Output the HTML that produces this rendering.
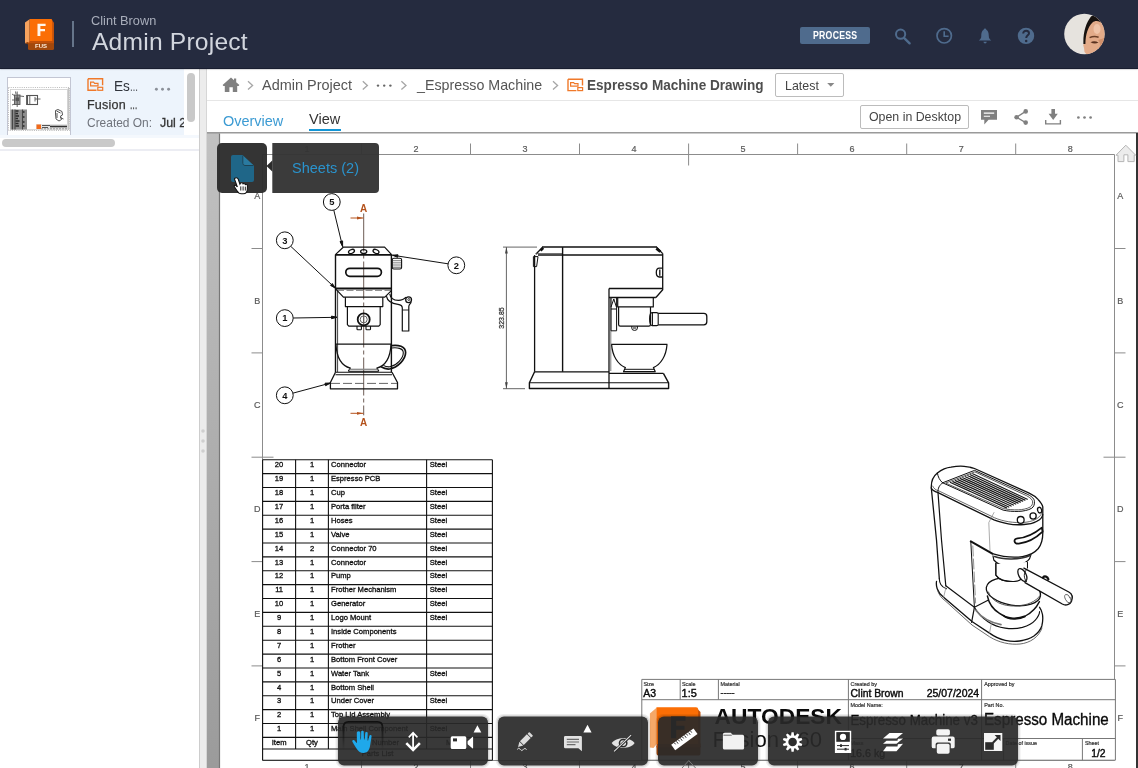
<!DOCTYPE html>
<html>
<head>
<meta charset="utf-8">
<title>Espresso Machine Drawing</title>
<style>
*{box-sizing:border-box;margin:0;padding:0}
html,body{width:1138px;height:768px;overflow:hidden;background:#fff;font-family:"Liberation Sans",sans-serif;}
#hdr,#left,#split,#main,#viewer{will-change:transform}
.abs{position:absolute}
.t{position:absolute;white-space:nowrap;transform-origin:0 0;line-height:1}
#hdr{position:absolute;left:0;top:0;width:1138px;height:68.500px;background:#252b3f;border-bottom:1px solid #191e30;box-shadow:0 0 1.500px rgba(0,0,20,.5);z-index:5}
#left{position:absolute;left:0;top:68px;width:199px;height:700px;background:#fff}
#split{position:absolute;left:199px;top:68px;width:8px;height:700px;background:#ececec;border-left:1px solid #cdcdcd;border-right:1px solid #d6d6d6}
#main{position:absolute;left:207px;top:68px;width:931px;height:700px;background:#fff}
#viewer{position:absolute;left:207px;top:132px;width:931px;height:636px;background:#bdbdbd;overflow:hidden}
</style>
</head>
<body>
<!-- HEADER -->
<div id="hdr">
<!-- fusion logo -->
<svg class="abs" style="left:22px;top:16px" width="36" height="38" viewBox="22 16 36 38">
 <path d="M28 42 L54 42 L54 48.5 Q54 50 52.5 50 L29.5 50 Q28 50 28 48.5 Z" fill="#a2480c"/>
 <path d="M52 20.5 L54 22.5 L54 43 L52 43 Z" fill="#c4520b"/>
 <path d="M28 41 L54 41 L54 43.2 L28 43.2 Z" fill="#c2500a"/>
 <path d="M25 22.5 L29.6 19.2 L29.6 41 L27.5 43.5 L25 43.2 Z" fill="#f7a35e"/>
 <path d="M25 43 L28 42 L28 44.5 Z" fill="#8a3b08"/>
 <path d="M29.6 19.1 L51 19.1 Q52.2 19.1 52.2 20.3 L52.2 41 L29.6 41 Z" fill="#fb6e05"/>
 <path d="M37.5 23.7 H45.6 V26.1 H40.4 V28.9 H45 V31.2 H40.4 V35.9 H37.5 Z" fill="#fff5ea"/>
 <text x="41" y="47.7" font-family="Liberation Sans, sans-serif" font-size="5.8" font-weight="700" fill="#ffeedd" text-anchor="middle" textLength="12" lengthAdjust="spacingAndGlyphs">FUS</text>
</svg>
<div class="abs" style="left:72px;top:21px;width:2px;height:26px;background:#66758a"></div>
<div class="t" id="h_user" style="left:91px;top:14px;font-size:13.5px;color:#a9aebb;transform:scaleX(.945)">Clint Brown</div>
<div class="t" id="h_proj" style="left:92px;top:30px;font-size:24.5px;color:#d2d6de;transform:scaleX(1.005);letter-spacing:.2px">Admin Project</div>
<!-- process btn -->
<div class="abs" style="left:800px;top:27px;width:70px;height:17px;background:#4f6b8d;border-radius:2px"></div>
<div class="t" id="h_proc" style="left:813px;top:30px;font-size:10.5px;font-weight:700;color:#fff;transform:scaleX(.83);letter-spacing:.3px">PROCESS</div>
<!-- icons -->
<svg class="abs" style="left:892px;top:26px" width="150" height="22" viewBox="892 26 150 22" fill="none" stroke="#4f6b8d">
 <circle cx="900.6" cy="34.2" r="4.6" stroke-width="2"/>
 <path d="M904 37.8 L909.6 43.3" stroke-width="2.4" stroke-linecap="round"/>
 <circle cx="944.2" cy="35.8" r="7.2" stroke-width="1.7"/>
 <path d="M944.2 31.2 V36.3 H948.6" stroke-width="1.6"/>
 <path d="M985 29 Q985 28 985 28.6 M985 29.6 C981.6 30 981.3 33.5 981.3 36 C981.3 38.5 980 39.6 978.8 40.6 L991.3 40.6 C990 39.6 988.8 38.5 988.8 36 C988.8 33.5 988.4 30 985 29.6 Z" fill="#4f6b8d" stroke="none"/>
 <circle cx="985" cy="29.6" r="1.2" fill="#4f6b8d" stroke="none"/>
 <path d="M983.4 41.8 H986.8 Q986.6 43.6 985.1 43.6 Q983.6 43.6 983.4 41.8 Z" fill="#4f6b8d" stroke="none"/>
 <circle cx="1026" cy="35.9" r="8.2" fill="#4f6b8d" stroke="none"/>
 <path d="M1023.2 33.6 C1023.2 31.6 1024.6 30.7 1026.1 30.7 C1027.8 30.7 1029 31.7 1029 33.2 C1029 35.3 1026.2 35.5 1026.2 38" stroke="#252b3f" stroke-width="2"/>
 <circle cx="1026.2" cy="40.9" r="1.25" fill="#252b3f" stroke="none"/>
</svg>
<!-- avatar -->
<svg class="abs" style="left:1062px;top:12px" width="44" height="44" viewBox="1062 12 44 44">
 <defs><clipPath id="avc"><circle cx="1084.4" cy="34" r="20.2"/></clipPath></defs>
 <g clip-path="url(#avc)">
  <rect x="1062" y="12" width="44" height="44" fill="#e6e3de"/>
  <path d="M1095 18 C1088 24 1084.3 32 1084.3 43 L1083.2 45 L1084 48 L1084.5 52 L1090 58 L1110 58 L1110 12 Z" fill="#e3ab89"/>
  <path d="M1098 40 C1102 44 1100 52 1092 56 L1110 58 L1110 36 Z" fill="#c98660" opacity=".7"/>
  <ellipse cx="1097" cy="29" rx="3.5" ry="5" fill="#f3cbb0" opacity=".8"/>
  <path d="M1091 16.5 C1086 23 1083 32 1083.4 44 L1085.4 44 C1085.6 34 1088 27 1092.5 22.5 C1095.5 20 1099.5 20.5 1104.5 25 L1108 18 L1098 12 Z" fill="#17120f"/>
  <path d="M1089.6 37.6 Q1094 35.6 1098.6 37.2" stroke="#6b3f28" stroke-width="1.5" fill="none"/>
  <path d="M1090.5 42.2 Q1094.5 40.2 1098.5 42.6 Q1094.5 44.6 1090.5 42.2 Z" fill="#5a3220"/>
 </g>
</svg>
</div>
<!-- LEFT PANEL -->
<div id="left">
<div class="abs" style="left:0;top:0;width:184px;height:67px;background:#edf4fc"></div>
<div class="abs" style="left:0;top:67px;width:199px;height:3px;background:#f4f8fd"></div>
<!-- thumbnail -->
<div class="abs" style="left:7px;top:9px;width:64px;height:58px;background:#fff;border:1px solid #c3c6d3;border-bottom:none;overflow:hidden">
<svg class="abs" style="left:0;top:0" width="62" height="57" viewBox="8 78 62 57">
 <rect x="8.5" y="87.5" width="61" height="43" fill="none" stroke="#b9b9b9" stroke-width="1" stroke-dasharray="1 1.2"/>
 <rect x="10.5" y="89.5" width="57" height="40" fill="none" stroke="#cfcfcf" stroke-width=".8"/>
 <rect x="67.8" y="88" width="1.6" height="42" fill="#c4c4c4"/>
 <!-- front view -->
 <g stroke="#555" stroke-width=".9" fill="none">
  <rect x="14.5" y="95" width="5.5" height="9.5" fill="#999"/>
  <path d="M12 94 L15 96 M12 100 H14.5 M12 105 L14.5 104 M17.2 91.5 V107 M20 96 L24 96.5 M15.5 91.5 L16 94"/>
  <rect x="16" y="98" width="2.6" height="2.6" fill="#555"/>
  <rect x="27.5" y="95.5" width="10" height="9" stroke-width="1.1"/>
  <path d="M29.8 95.5 V104.5 M35 99 H40.5 M35 97 V101.5 M26.5 95 V105"/>
 </g>
 <!-- table -->
 <rect x="10.5" y="109.5" width="16.5" height="20" fill="#8d8d8d"/>
 <g stroke="#2a2a2a" stroke-width="1.1">
  <path d="M12.5 109.5 V129.5 M15 109.5 V129.5 M22.5 109.5 V129.5" opacity=".7"/>
  <path d="M15.5 111 H18.5 M15.5 113.5 H18 M15.5 116 H19 M15.5 118.5 H18 M15.5 121 H19.5 M15.5 123.5 H18.5 M15.5 126 H19 M22.8 112 H24.5 M22.8 117 H24.5 M22.8 122 H24.5 M22.8 126 H24.5" stroke-width="1.4"/>
 </g>
 <!-- iso view -->
 <g stroke="#444" stroke-width=".9" fill="none">
  <path d="M55.5 110.5 L58 109.5 L62 111.5 L62.5 115 L60.5 116 L61.5 119.5 L59 121 L56 119 L55.5 114 Z"/>
  <path d="M56.5 111 L60.5 113 M57 113 V118 M60 117.5 L63.5 119"/>
 </g>
 <!-- title block -->
 <rect x="36" y="124" width="31.5" height="5.5" fill="#e4e4e4"/>
 <rect x="36.5" y="124.5" width="4.5" height="4.5" fill="#f26a1b"/>
 <path d="M42 125.5 H50 M42 127.5 H48" stroke="#555" stroke-width="1"/>
 <path d="M50 126.5 H67" stroke="#333" stroke-width="1.6"/>
 <path d="M41 128.8 H67" stroke="#777" stroke-width=".7" stroke-dasharray="2 1"/>
</svg>
</div>
<!-- file icon -->
<svg class="abs" style="left:86px;top:9px" width="19" height="15" viewBox="86 77 19 15" fill="none" stroke="#f0792a">
 <path d="M88 78.7 H102.6 V85.2 M96.5 90.2 H88 V78.7" stroke-width="1.4"/>
 <path d="M90.6 85.8 V82.2 H93.6 L94.6 83.3 H98 V85.8 Z" stroke-width="1.2"/>
 <rect x="97.8" y="87.3" width="4.9" height="3" stroke-width="1.2"/>
</svg>
<div class="t" id="l_es" style="left:114px;top:10px;font-size:15.5px;color:#30343c;transform:scaleX(.88)">Es<span style="display:inline-block;transform:scaleX(.62);transform-origin:0 0">…</span></div>
<svg class="abs" style="left:153px;top:18px" width="20" height="6" viewBox="0 0 20 6" fill="#8b9099"><circle cx="3.4" cy="3.3" r="1.45"/><circle cx="9.5" cy="3.3" r="1.45"/><circle cx="15.6" cy="3.3" r="1.45"/></svg>
<div class="t" id="l_fu" style="left:87px;top:30px;font-size:13.5px;color:#333;transform:scaleX(.93);letter-spacing:.2px;-webkit-text-stroke:.25px #333">Fusion <span style="display:inline-block;transform:scaleX(.62);transform-origin:0 0">…</span></div>
<div class="t" id="l_cr" style="left:87px;top:48px;font-size:13.5px;color:#6f737b;transform:scaleX(.885)">Created On:</div>
<div class="abs" style="left:158px;top:46px;width:26px;height:18px;overflow:hidden"><div class="t" id="l_jul" style="left:2px;top:2px;font-size:13.5px;color:#333;transform:scaleX(.92);-webkit-text-stroke:.3px #333">Jul 2024</div></div>
<!-- v scrollbar -->
<div class="abs" style="left:184px;top:0;width:15px;height:67px;background:#fff"></div>
<div class="abs" style="left:187px;top:5px;width:8px;height:48.500px;background:#c9c9c9;border-radius:4px"></div>
<!-- h scrollbar -->
<div class="abs" style="left:2px;top:70.500px;width:113px;height:8.500px;background:#c9c9c9;border-radius:4.500px"></div>
<div class="abs" style="left:0;top:81px;width:199px;height:2px;background:#ecedf3"></div>
</div>
<div id="split"><svg class="abs" style="left:0;top:358px" width="7" height="30" viewBox="0 0 7 30" fill="#cfcfcf"><circle cx="3" cy="5" r="1.8"/><circle cx="3" cy="15" r="1.8"/><circle cx="3" cy="25" r="1.8"/></svg></div>
<!-- MAIN -->
<div id="main">
<div class="abs" style="left:0;top:32px;width:931px;height:1px;background:#e6e6e6"></div>
<!-- breadcrumb (coords relative to main: x-207,y-68) -->
<svg class="abs" style="left:14px;top:8px" width="380" height="18" viewBox="221 76 380 18" fill="none">
 <path d="M222.6 85 L231 77.6 L234 80.2 V78.6 H236.2 V82.2 L239.4 85 L238.6 85.9 L237.2 85.9 V92 H232.8 V87.3 H229.4 V92 H224.8 V85.9 L223.4 85.9 Z" fill="#808080"/>
 <g stroke="#a6a6a6" stroke-width="1.3">
  <path d="M248 81.2 L252.6 85.4 L248 89.6"/>
  <path d="M362.8 81.2 L367.4 85.4 L362.8 89.6"/>
  <path d="M401.4 81.2 L406 85.4 L401.4 89.6"/>
  <path d="M553 81.2 L557.6 85.4 L553 89.6"/>
 </g>
 <g fill="#666"><circle cx="378" cy="85.6" r="1.2"/><circle cx="384.2" cy="85.6" r="1.2"/><circle cx="390.4" cy="85.6" r="1.2"/></g>
 <g stroke="#f0792a">
  <path d="M568 79.2 H582.5 V85.6 M576.4 90.6 H568 V79.2" stroke-width="1.4"/>
  <path d="M570.6 86.2 V82.6 H573.6 L574.6 83.7 H578 V86.2 Z" stroke-width="1.2"/>
  <rect x="577.8" y="87.6" width="4.8" height="3" stroke-width="1.2"/>
 </g>
</svg>
<div class="t" id="b_ap" style="left:55px;top:9.300px;font-size:15px;color:#555;transform:scaleX(.965)">Admin Project</div>
<div class="t" id="b_em" style="left:210px;top:9.300px;font-size:15px;color:#555;transform:scaleX(.95)">_Espresso Machine</div>
<div class="t" id="b_ti" style="left:380px;top:9.300px;font-size:15px;font-weight:700;color:#4e4e4e;transform:scaleX(.905)">Espresso Machine Drawing</div>
<div class="abs" style="left:568px;top:5px;width:69px;height:24px;border:1px solid #bcbcbc;border-radius:2px;background:#fff"></div>
<div class="t" id="b_la" style="left:578px;top:10.5px;font-size:13.5px;color:#444;transform:scaleX(.92)">Latest</div>
<svg class="abs" style="left:619px;top:14px" width="10" height="6" viewBox="0 0 10 6"><path d="M1.2 1 H8.4 L4.8 4.8 Z" fill="#888"/></svg>
<!-- tabs -->
<div class="t" id="t_ov" style="left:16px;top:45px;font-size:15px;color:#3c9bd3;transform:scaleX(.965)">Overview</div>
<div class="t" id="t_vi" style="left:102px;top:43px;font-size:15px;color:#333;transform:scaleX(.97)">View</div>
<div class="abs" style="left:102px;top:61px;width:32px;height:2px;background:#1195d6"></div>
<!-- right buttons -->
<div class="abs" style="left:653px;top:37px;width:109px;height:24px;border:1px solid #bcbcbc;border-radius:2px;background:#fff"></div>
<div class="t" id="b_od" style="left:662px;top:42px;font-size:13.5px;color:#444;transform:scaleX(.915)">Open in Desktop</div>
<svg class="abs" style="left:770px;top:38px" width="122" height="22" viewBox="977 106 122 22" fill="#808080">
 <path d="M981 110 H997 V119.8 H988.6 L984.3 124.6 V119.8 H981 Z"/>
 <path d="M983.8 113.1 H994.2 M983.8 116.2 H990" stroke="#fff" stroke-width="1.1" fill="none"/>
 <circle cx="1025.7" cy="111.4" r="2.3"/><circle cx="1016.6" cy="117.2" r="2.3"/><circle cx="1025.7" cy="122.6" r="2.3"/>
 <path d="M1025.7 111.4 L1016.6 117.2 L1025.7 122.6" stroke="#808080" stroke-width="1.3" fill="none"/>
 <path d="M1051.4 108.9 H1055 V113.8 H1057.8 L1053.2 120 L1048.6 113.8 H1051.4 Z"/>
 <path d="M1045.7 120 V123.9 H1060.4 V120" stroke="#808080" stroke-width="1.4" fill="none"/>
 <circle cx="1078.4" cy="117.5" r="1.35"/><circle cx="1084.5" cy="117.5" r="1.35"/><circle cx="1090.6" cy="117.5" r="1.35"/>
</svg>
</div>
<!-- VIEWER -->
<div id="viewer">
<svg class="abs" style="left:0;top:0" width="931" height="636" viewBox="207 132 931 636">
<defs><linearGradient id="vbg" x1="0" y1="0" x2="0" y2="1"><stop offset="0" stop-color="#c1c1c1"/><stop offset="1" stop-color="#9b9b9b"/></linearGradient><linearGradient id="actg" x1="0" y1="721" x2="0" y2="750" gradientUnits="userSpaceOnUse"><stop offset="0" stop-color="#101010"/><stop offset=".35" stop-color="#101010" stop-opacity=".7"/><stop offset="1" stop-color="#101010" stop-opacity="0"/></linearGradient></defs><rect x="207" y="132" width="931" height="636" fill="url(#vbg)"/>
<rect x="207" y="132" width="931" height="1.6" fill="#9a9a9a"/>
<rect x="219.5" y="133.6" width="917" height="640" fill="#fff"/>
<path d="M219.5 133.6 V768" stroke="#777" stroke-width="1.2"/>
<path d="M1137 133 V768" stroke="#333" stroke-width="2"/>
<g id="frame" stroke="#8c8c8c" stroke-width="1" fill="none"><path d="M262.5 154.5 H1114.5 V760.5 H262.5 Z"/><path d="M361.5 143.5 V154.5 M361.5 760.5 V768"/><path d="M470.5 143.5 V154.5 M470.5 760.5 V768"/><path d="M579.5 143.5 V154.5 M579.5 760.5 V768"/><path d="M688.6 143.5 V165.5 M688.6 749.5 V768"/><path d="M797.6 143.5 V154.5 M797.6 760.5 V768"/><path d="M906.7 143.5 V154.5 M906.7 760.5 V768"/><path d="M1015.7 143.5 V154.5 M1015.7 760.5 V768"/><path d="M251.5 248.5 H262.5 M1114.5 248.5 H1125.5"/><path d="M251.5 352.9 H262.5 M1114.5 352.9 H1125.5"/><path d="M251.5 457.2 H273.5 M1103.5 457.2 H1125.5"/><path d="M251.5 561.6 H262.5 M1114.5 561.6 H1125.5"/><path d="M251.5 665.9 H262.5 M1114.5 665.9 H1125.5"/></g>
<g id="zlab" font-family="Liberation Sans, sans-serif" font-size="9" fill="#5a5a5a" stroke="#5a5a5a" stroke-width=".2" text-anchor="middle"><text x="307.0" y="152.2">1</text><text x="307.0" y="769.5">1</text><text x="416.0" y="152.2">2</text><text x="416.0" y="769.5">2</text><text x="525.0" y="152.2">3</text><text x="525.0" y="769.5">3</text><text x="634.0" y="152.2">4</text><text x="634.0" y="769.5">4</text><text x="743.1" y="152.2">5</text><text x="743.1" y="769.5">5</text><text x="852.1" y="152.2">6</text><text x="852.1" y="769.5">6</text><text x="961.2" y="152.2">7</text><text x="961.2" y="769.5">7</text><text x="1070.2" y="152.2">8</text><text x="1070.2" y="769.5">8</text><text x="257.3" y="199.2">A</text><text x="1120.2" y="199.2">A</text><text x="257.3" y="303.6">B</text><text x="1120.2" y="303.6">B</text><text x="257.3" y="408.0">C</text><text x="1120.2" y="408.0">C</text><text x="257.3" y="512.3">D</text><text x="1120.2" y="512.3">D</text><text x="257.3" y="616.7">E</text><text x="1120.2" y="616.7">E</text><text x="257.3" y="721.0">F</text><text x="1120.2" y="721.0">F</text></g>
<path d="M1116 155.200 L1125.800 145.200 L1135.700 155.200 L1134.200 155.200 L1134.200 161.600 L1127.900 161.600 L1127.900 154.800 L1123.900 154.800 L1123.900 161.600 L1118 161.600 L1118 155.200 Z" fill="#ececec" stroke="#b5b5b5" stroke-width="1"/>
<g id="frontview" fill="none" stroke="#111" stroke-linejoin="round"><path d="M333.8 210.2 L342.6 246.6" stroke="#111" stroke-width="1" fill="none"/><path d="M342.6 246.6 L342.6 240.9 L340.0 241.6 Z" fill="#111"/><path d="M290.6 246.2 L335.4 288.2" stroke="#111" stroke-width="1" fill="none"/><path d="M335.4 288.2 L332.3 283.5 L330.5 285.4 Z" fill="#111"/><path d="M448 263.8 L392.4 255.2" stroke="#111" stroke-width="1" fill="none"/><path d="M392.4 255.2 L397.6 257.3 L398.0 254.8 Z" fill="#111"/><path d="M293.2 318 L337 317.3" stroke="#111" stroke-width="1" fill="none"/><path d="M337 317.3 L331.5 316.1 L331.5 318.7 Z" fill="#111"/><path d="M292.8 393.2 L330.6 383" stroke="#111" stroke-width="1" fill="none"/><path d="M330.6 383 L325.0 383.2 L325.6 385.7 Z" fill="#111"/><circle cx="331.8" cy="202" r="8.4" fill="#fff" stroke="#111" stroke-width="1"/><text x="331.8" y="205.2" font-family="Liberation Sans, sans-serif" font-size="9.400" font-weight="700" fill="#111" stroke="none" text-anchor="middle">5</text><circle cx="284.8" cy="240.3" r="8.4" fill="#fff" stroke="#111" stroke-width="1"/><text x="284.8" y="243.5" font-family="Liberation Sans, sans-serif" font-size="9.400" font-weight="700" fill="#111" stroke="none" text-anchor="middle">3</text><circle cx="456.3" cy="265.3" r="8.4" fill="#fff" stroke="#111" stroke-width="1"/><text x="456.3" y="268.5" font-family="Liberation Sans, sans-serif" font-size="9.400" font-weight="700" fill="#111" stroke="none" text-anchor="middle">2</text><circle cx="284.8" cy="318.1" r="8.4" fill="#fff" stroke="#111" stroke-width="1"/><text x="284.8" y="321.3" font-family="Liberation Sans, sans-serif" font-size="9.400" font-weight="700" fill="#111" stroke="none" text-anchor="middle">1</text><circle cx="284.8" cy="395.3" r="8.4" fill="#fff" stroke="#111" stroke-width="1"/><text x="284.8" y="398.5" font-family="Liberation Sans, sans-serif" font-size="9.400" font-weight="700" fill="#111" stroke="none" text-anchor="middle">4</text><path d="M363.7 213.500 V415.300" stroke="#5c4a42" stroke-width=".9" stroke-dasharray="38 3 4 3" stroke-dashoffset="0"/><path d="M350.500 218 H363.500 M350.500 413.300 H363.500" stroke="#b4521c" stroke-width="1"/><path d="M363 218 L357 216.600 V219.400 Z M363 413.300 L357 411.900 V414.700 Z" fill="#b4521c" stroke="none"/><g font-family="Liberation Sans, sans-serif" font-size="10" font-weight="700" fill="#b4521c" stroke="none" text-anchor="middle"><text x="363.700" y="212.400">A</text><text x="363.700" y="426.400">A</text></g><path d="M335.400 254.600 L343.200 247.200 H384.600 L391.600 254.600" stroke-width="1.200"/><path d="M335.400 254.800 H391.600" stroke-width="1.800"/><ellipse cx="351.500" cy="251.500" rx="3.100" ry="1.900" transform="rotate(-22 351.500 251.500)" stroke-width="1.300"/><ellipse cx="363.700" cy="251.500" rx="3.100" ry="1.900" stroke-width="1.300"/><ellipse cx="376" cy="251.500" rx="3.100" ry="1.900" transform="rotate(22 376 251.500)" stroke-width="1.300"/><path d="M335.500 254.600 V372.300 M391.400 254.600 V372.300" stroke-width="1.400"/><path d="M337.600 290 V372" stroke-width="1" stroke="#444"/><rect x="345.800" y="268.300" width="35.600" height="8" rx="4" stroke-width="1.700"/><path d="M335.400 288.500 H391.600" stroke-width="1.800"/><path d="M337 290.400 H391" stroke-width=".8" stroke="#666" stroke-dasharray="7 2.500"/><path d="M335.600 288.800 L343.400 297.200 H384.800 L391.400 290.600" stroke-width="1.200"/><path d="M345.400 297.200 V306.600 H382.800 V297.200" stroke-width="1.200"/><path d="M347.400 306.600 V324.600 L348.800 326.100 H378.800 L380.200 324.600 V306.600" stroke-width="1.200"/><circle cx="363.700" cy="319.400" r="6" stroke-width="1.800"/><circle cx="363.700" cy="319.400" r="3.500" stroke-width=".9" stroke="#555"/><path d="M363.700 316.500 V322.300" stroke-width=".8" stroke="#555"/><path d="M357 326.100 V329 Q357 329.800 357.800 329.800 H360.600 Q361.400 329.800 361.400 329 V326.100 M366 326.100 V329 Q366 329.800 366.800 329.800 H369.700 Q370.500 329.800 370.500 329 V326.100" stroke-width="1.100"/><rect x="392.300" y="258.200" width="9.300" height="10.800" rx="1.600" stroke-width="1.100"/><path d="M393 260.500 H401 M393 262.300 H401 M393 264.100 H401 M393 265.900 H401 M393 267.500 H401" stroke="#777" stroke-width=".8"/><path d="M386.400 296.200 C387.400 301.500 391 303.600 398 304.400 C401 304.800 402.300 305.600 402.300 308 V331 H408.800 V306.600 C408.800 304.600 410.400 304 411.200 302.200" stroke-width="1.200"/><path d="M389.800 294 C390.400 298.600 393 300.200 398.400 300.400 C402 300.400 404.400 299 406 297.200" stroke-width="1.200"/><circle cx="408.600" cy="299.700" r="2.900" stroke-width="1.300"/><circle cx="408.800" cy="299.500" r="1" stroke-width=".8"/><path d="M402.300 310 H408.800" stroke-width=".9"/><path d="M335.500 344.200 H391.400" stroke-width="1.300"/><path d="M336 344.400 C336.600 357 341.600 365.800 350.400 368.200 L348.300 371 M391 344.400 C390.400 357 385.400 365.800 376.800 368.200 L378.800 371" stroke-width="1.200"/><path d="M349.500 369.300 H377.600" stroke="#888" stroke-width="1.300"/><path d="M348.300 371.300 H378.800" stroke-width="1"/><path d="M391.600 345.600 C398 344.800 405.600 346 405.600 352.600 C405.600 359.600 397.600 367.600 389.600 369 C386.400 369.400 383.600 368.400 381 366.800" stroke-width="1.700"/><path d="M391.600 348 C397 347.400 403.300 348 403.300 352.800 C403.300 358.400 396.800 365.400 390 366.800 C387.400 367.200 385.400 366.600 383.400 365.400" stroke-width="1.100"/><path d="M335.500 372.300 H392 M335.500 374.700 H392" stroke-width="1.100"/><path d="M335.500 372.300 L330.400 382.500 V388.800 H397.500 V382.500 L392 372.300" stroke-width="1.300"/><path d="M331 383.400 H397" stroke-width=".9" stroke="#555" stroke-dasharray="9 3"/></g>
<g id="sideview" fill="none" stroke="#111" stroke-linejoin="round" stroke-width="1.200"><path d="M503 247.100 H537 M503 388.700 H525 M506.400 247.100 V388.700" stroke="#555" stroke-width=".9"/><path d="M506.400 247.100 L505 253.600 H507.800 Z M506.400 388.700 L505 382.200 H507.800 Z" fill="#444" stroke="none"/><text transform="translate(504,318) rotate(-90)" font-family="Liberation Sans, sans-serif" font-size="7" fill="#333" stroke="#333" stroke-width=".25" text-anchor="middle">323.85</text><path d="M542 247.100 H657" stroke-width="1.500"/><path d="M538 255.100 H662.700" stroke-width="1.500"/><path d="M542.600 247.300 L535.800 254.200" stroke-width="1.300"/><path d="M543.200 247.800 L540.600 250.600" stroke-width="2.600"/><path d="M656.600 247.300 L662.700 253.600" stroke-width="1.300"/><path d="M656.400 248.400 L660.400 251.800" stroke-width="2.800"/><path d="M536 253.600 H562.600" stroke-width=".9" stroke="#555"/><path d="M534.600 255.100 V371.800" stroke-width="1.300"/><path d="M533.400 256.600 H538 L536.600 266.600 H533.400 Z" stroke-width="1"/><path d="M562.600 247.100 V371.800" stroke-width="1.400"/><path d="M662.700 253.600 V289.800 L655.900 297.500" stroke-width="1.300"/><path d="M609 288.600 H662.700" stroke-width="1.500"/><path d="M609 297.500 H655.900" stroke-width="1.300"/><path d="M662.700 268.200 H659.400 Q656.300 268.200 656.300 272.600 Q656.300 277 659.400 277 H662.700 M659.800 269.400 V275.800" stroke-width="1.300"/><path d="M609 288.600 V388.400" stroke-width="1.300"/><path d="M610.800 297.500 V371" stroke-width=".8" stroke="#555"/><path d="M611 297.500 V330.800 H616.600 V297.500 M611 307 L613.800 299 L616.400 307 M611 309 H616.600" stroke-width="1"/><path d="M617.700 297.500 V306.900 H653.300 V297.500" stroke-width="1.200"/><path d="M618.600 306.900 V324.400 Q618.600 326.100 620.300 326.100 H648.800 Q650.500 326.100 650.500 324.400 V306.900" stroke-width="1.200"/><path d="M631.800 326.100 V328.200 Q631.800 330.400 634.600 330.400 Q637.400 330.400 637.400 328.200 V326.100 M633 328 H636.200" stroke-width="1"/><path d="M652 312.600 H656.600 Q658.200 312.600 658.200 314 V324.200 Q658.200 325.600 656.600 325.600 H652 Q649.600 325.600 649.600 319.100 Q649.600 312.600 652 312.600 Z M652.400 312.800 V325.400" stroke-width="1.100"/><path d="M658.200 313.400 H703.800 Q706.800 313.400 706.800 316.400 V321.800 Q706.800 324.800 703.800 324.800 H658.200" stroke-width="1.300"/><path d="M611.200 344.400 H667.400" stroke-width="1.300"/><path d="M611.600 344.600 C612.400 355.600 617.600 364.400 625.400 367.600 L623.600 371.400 M667 344.600 C666.200 355.600 661 364.400 653.400 367.600 L655.200 371.400" stroke-width="1.200"/><path d="M624.800 369.300 H654" stroke-width="1"/><path d="M534.600 371.800 H609 M609 373.400 H663.400 M623 371.600 H655.600" stroke-width="1.300"/><path d="M534.600 371.800 L529.400 382.800 V388.500 H668.600 V382.800 L663.400 373.400" stroke-width="1.400"/><path d="M529.400 382.800 H668.600" stroke-width="1.100"/></g>
<g id="isoview" fill="none" stroke="#111" stroke-width="1.100" stroke-linejoin="round" stroke-linecap="round"><path d="M931.300 488 C931 481 933.500 476 937.400 473 C942 469.500 947 467.600 951 467.200 C956 466.200 961 466 964.100 466.300 C968 466.600 971.500 467.400 974.500 468.500 L1029.200 493.200 C1033 495 1036 497 1038.300 499.700 C1041 502.600 1042.500 505 1042.800 506.900 L1042.800 514.700 C1042 518 1040 520 1037 521.200 C1033 523.400 1028 524.400 1024 524.500 C1018 525 1012 524.600 1008.300 523.800 C1003 522.800 998 521.600 994 519.900 L938 492.600 C934.500 491.400 932 490 931.300 488 Z" stroke-width="1.300"/><path d="M932.600 486 C934 489 936 490 938.600 490.800 L994.600 517.800 C1003 521.400 1014 523.200 1024 522.400 C1032 521.800 1039 519 1041.600 513.600" stroke-width=".8" stroke="#444"/><path d="M937.400 473 C938 477 939.600 480.200 942.600 482.800" stroke-width="1"/><path d="M938 492.600 C937.600 488 939.600 485 942.600 482.800" stroke-width="1"/><path d="M942.600 482.800 L974.500 470.400 L1027.900 494.500 C1032 496.600 1034.600 499 1034.400 501.700 C1034.600 505 1033.600 506.800 1031.800 508.200 C1028 510.400 1023 511.200 1018.800 511.400 C1013 511.600 1008 511.200 1003.100 510.100 L942.600 482.800" stroke-width="1"/><path d="M946 482.900 L974.800 471.900 L1026.600 495.700 C1030.400 497.700 1032.600 499.600 1032.600 501.900 C1032.600 504.400 1031.800 505.900 1030.200 507 C1026.600 509 1022.600 509.600 1018.600 509.800 C1013 510 1008.400 509.600 1003.600 508.600 Z" stroke-width=".8" stroke="#333"/><path d="M950.5 482.5 L1006.5 507.9" stroke-width="1.250" stroke="#1a1a1a"/><path d="M952.9 481.6 L1008.8 507.0" stroke-width="1.250" stroke="#1a1a1a"/><path d="M955.4 480.6 L1011.1 506.0" stroke-width="1.250" stroke="#1a1a1a"/><path d="M957.9 479.6 L1013.4 505.0" stroke-width="1.250" stroke="#1a1a1a"/><path d="M960.4 478.6 L1015.7 504.0" stroke-width="1.250" stroke="#1a1a1a"/><path d="M962.8 477.7 L1018.1 503.1" stroke-width="1.250" stroke="#1a1a1a"/><path d="M965.3 476.7 L1020.4 502.1" stroke-width="1.250" stroke="#1a1a1a"/><path d="M967.8 475.7 L1022.7 501.1" stroke-width="1.250" stroke="#1a1a1a"/><path d="M970.3 474.7 L1025.0 500.1" stroke-width="1.250" stroke="#1a1a1a"/><path d="M972.7 473.8 L1027.3 499.2" stroke-width="1.250" stroke="#1a1a1a"/><path d="M994 512.500 L988.800 522.600 L990 551" stroke-width=".7" stroke="#888"/><circle cx="1020.700" cy="519.900" r="3.400" stroke-width="1.300" fill="#fff"/><circle cx="1033.100" cy="516" r="3.100" stroke-width="1.300" fill="#fff"/><ellipse cx="1039.600" cy="510.100" rx="2" ry="2.900" stroke-width="1.300" fill="#fff" transform="rotate(-15 1039.600 510.100)"/><path d="M1042.800 514.700 V533 C1042.800 540 1041 545 1038.300 548.500 C1034 553.500 1028 555.800 1022.400 556.600 C1014 557.800 1004 557.200 992.300 553.600" stroke-width="1.300"/><path d="M1017.600 538.400 C1025 537.800 1034 534 1041.800 527.600 L1042.600 531.600 C1036 538 1027 542.600 1018.800 543.600 C1013.600 544 1013 538.800 1017.600 538.400 Z" stroke-width="1.800"/><path d="M970.800 541.400 L992.300 553.600" stroke-width="2"/><path d="M970.800 541.400 L974.400 607.300" stroke-width="1"/><path d="M972.800 546 L975.600 603" stroke-width=".8" stroke="#777" stroke-dasharray="10 3"/><path d="M931.300 488 L936.500 540 L939.300 578.700" stroke-width="1.300"/><path d="M938 492.600 L941.500 540 L945.800 585.800" stroke-width="1.200"/><path d="M945.800 585.800 L974.400 607.300 L988 600.200" stroke-width="1.200"/><path d="M993 555.800 L993.800 560 C997 563.600 1001 565.200 1005.200 565.800 C1010 566.400 1015 566.200 1019.600 565 C1024 563.600 1027.600 561.400 1029.600 558.600 L1031 554.600" stroke-width="1.200"/><path d="M994.600 556.600 C1003 560 1020 560 1030 555.600" stroke-width="1.600" stroke="#333"/><path d="M995.900 563.400 V575.100 C998 578 1000 579.400 1002.400 580.100 C1006 581.200 1010 581.600 1013.800 581.500 C1017 581.400 1019.600 580.600 1021 579.400 M1027.400 562.400 V568" stroke-width="1.200"/><ellipse cx="1013.400" cy="591.600" rx="27.400" ry="13.600" transform="rotate(9 1013.400 591.600)" stroke-width="1.300" fill="none"/><path d="M988.400 592 C992 602 1003 606.400 1016 606 C1027 605.600 1036 601.600 1040 595.600" stroke-width=".9" stroke="#444"/><path d="M996.500 564 V575 C1000 580.600 1016 582.600 1021.400 578.800 L1019 568 L1026.800 568 V562 Z" fill="#fff" stroke="none"/><path d="M995.900 563.400 V575.100 C998 578 1000 579.400 1002.400 580.100 C1006 581.200 1010 581.600 1013.800 581.500 C1017 581.400 1019.600 580.600 1021 579.400" stroke-width="1.200"/><path d="M1023.900 568.200 L1068.800 592 C1072.400 594 1072.800 598 1071.400 601.400 C1070 604.600 1066 606 1062.300 604 L1025 582.600" stroke-width="1.400" fill="#fff"/><ellipse cx="1022.200" cy="575" rx="3.600" ry="7" transform="rotate(-28 1022.200 574.600)" stroke-width="1.300" fill="#fff"/><path d="M1026.400 569.600 C1023.600 573 1023.400 578 1026.600 581.800" stroke-width=".9"/><ellipse cx="1067.800" cy="598.600" rx="2.400" ry="4.600" transform="rotate(-28 1067.800 598.600)" stroke-width=".8" stroke="#555"/><path d="M1043 577.400 C1044.600 575.600 1047.600 576.400 1048.400 579.400" stroke-width="2.200"/><path d="M987.400 596 C989 604 994 610 999.500 613.400 C1003 616 1007 617.600 1011 618 C1016 618.600 1021 617.800 1025.300 616 C1031 613 1036 608.600 1039.400 601.600" stroke-width="1.400"/><path d="M1003.600 615.600 C1008 619.600 1019 620 1025 616.600" stroke-width="1.600"/><path d="M936.500 581.500 C936 585 936.600 587 937.200 588.700 C938.600 592.600 941 595.400 943.600 597.300 L972.300 621.700 L989.500 633.100 C995 637 1000 639.200 1005.200 640.300 C1010 641.400 1015 641.600 1019.600 641 C1025 640.200 1030 638.600 1033.900 636 C1038 633 1040.600 629.600 1041.800 626 C1042.800 622 1043 618 1042.500 614.500 C1042 611.600 1041 609.200 1039.600 607.300" stroke-width="1.300"/><path d="M939.300 578.700 C939.400 581 940 583 940.800 584.400 C942 586.400 944 587.800 946.500 588.700 M974.400 607.300 C978 613.600 982 618 988 621.700 C993 625 999 627.200 1005.200 628.100 C1011 629 1017 628.800 1022.400 627.400 C1028 625.800 1032.600 623.400 1035.300 620.200 C1038 617 1039.400 614.400 1039.600 611.600" stroke-width="1.100"/><path d="M976 610.600 C981 617 990 622.600 1001 624.600" stroke-width="1.600" stroke="#777"/><path d="M974.400 607.300 L971.600 622.400" stroke-width="1.200"/><path d="M937.600 590.600 C939 595 942 598.600 945 600.600 L972 625 L989.600 636.800 C999 642.600 1010 645 1020 644 C1030 643 1039 637 1042 628" stroke-width=".8" stroke="#444"/><path d="M943.600 597.300 L945.800 588.200 M989.500 633.100 L991.500 622.800" stroke-width=".7" stroke="#888"/></g>
<g id="ptable"><rect x="262.6" y="459.7" width="229.8" height="300.6" fill="#fff" stroke="none"/><g stroke="#111" stroke-width="1.100" fill="none"><path d="M262.6 459.70 H492.4"/><path d="M262.6 473.58 H492.4"/><path d="M262.6 487.47 H492.4"/><path d="M262.6 501.35 H492.4"/><path d="M262.6 515.24 H492.4"/><path d="M262.6 529.12 H492.4"/><path d="M262.6 543.00 H492.4"/><path d="M262.6 556.89 H492.4"/><path d="M262.6 570.77 H492.4"/><path d="M262.6 584.66 H492.4"/><path d="M262.6 598.54 H492.4"/><path d="M262.6 612.42 H492.4"/><path d="M262.6 626.31 H492.4"/><path d="M262.6 640.19 H492.4"/><path d="M262.6 654.08 H492.4"/><path d="M262.6 667.96 H492.4"/><path d="M262.6 681.84 H492.4"/><path d="M262.6 695.73 H492.4"/><path d="M262.6 709.61 H492.4"/><path d="M262.6 723.50 H492.4"/><path d="M262.6 737.38 H492.4"/><path d="M262.6 748.98 H492.4 M262.6 760.30 H492.4"/><path d="M262.6 459.7 V760.3 M492.4 459.7 V760.3"/><path d="M295.6 459.7 V748.98"/><path d="M328.4 459.7 V748.98"/><path d="M426.6 459.7 V748.98"/></g><g font-family="Liberation Sans, sans-serif" font-size="7.600" fill="#111" stroke="#111" stroke-width=".32"><text x="279.100" y="467.40" text-anchor="middle">20</text><text x="312" y="467.40" text-anchor="middle">1</text><text x="331" y="467.40">Connector</text><text x="429.800" y="467.40">Steel</text><text x="279.100" y="481.28" text-anchor="middle">19</text><text x="312" y="481.28" text-anchor="middle">1</text><text x="331" y="481.28">Espresso PCB</text><text x="279.100" y="495.17" text-anchor="middle">18</text><text x="312" y="495.17" text-anchor="middle">1</text><text x="331" y="495.17">Cup</text><text x="429.800" y="495.17">Steel</text><text x="279.100" y="509.05" text-anchor="middle">17</text><text x="312" y="509.05" text-anchor="middle">1</text><text x="331" y="509.05">Porta filter</text><text x="429.800" y="509.05">Steel</text><text x="279.100" y="522.94" text-anchor="middle">16</text><text x="312" y="522.94" text-anchor="middle">1</text><text x="331" y="522.94">Hoses</text><text x="429.800" y="522.94">Steel</text><text x="279.100" y="536.82" text-anchor="middle">15</text><text x="312" y="536.82" text-anchor="middle">1</text><text x="331" y="536.82">Valve</text><text x="429.800" y="536.82">Steel</text><text x="279.100" y="550.70" text-anchor="middle">14</text><text x="312" y="550.70" text-anchor="middle">2</text><text x="331" y="550.70">Connector 70</text><text x="429.800" y="550.70">Steel</text><text x="279.100" y="564.59" text-anchor="middle">13</text><text x="312" y="564.59" text-anchor="middle">1</text><text x="331" y="564.59">Connector</text><text x="429.800" y="564.59">Steel</text><text x="279.100" y="578.47" text-anchor="middle">12</text><text x="312" y="578.47" text-anchor="middle">1</text><text x="331" y="578.47">Pump</text><text x="429.800" y="578.47">Steel</text><text x="279.100" y="592.36" text-anchor="middle">11</text><text x="312" y="592.36" text-anchor="middle">1</text><text x="331" y="592.36">Frother Mechanism</text><text x="429.800" y="592.36">Steel</text><text x="279.100" y="606.24" text-anchor="middle">10</text><text x="312" y="606.24" text-anchor="middle">1</text><text x="331" y="606.24">Generator</text><text x="429.800" y="606.24">Steel</text><text x="279.100" y="620.12" text-anchor="middle">9</text><text x="312" y="620.12" text-anchor="middle">1</text><text x="331" y="620.12">Logo Mount</text><text x="429.800" y="620.12">Steel</text><text x="279.100" y="634.01" text-anchor="middle">8</text><text x="312" y="634.01" text-anchor="middle">1</text><text x="331" y="634.01">Inside Components</text><text x="279.100" y="647.89" text-anchor="middle">7</text><text x="312" y="647.89" text-anchor="middle">1</text><text x="331" y="647.89">Frother</text><text x="279.100" y="661.78" text-anchor="middle">6</text><text x="312" y="661.78" text-anchor="middle">1</text><text x="331" y="661.78">Bottom Front Cover</text><text x="279.100" y="675.66" text-anchor="middle">5</text><text x="312" y="675.66" text-anchor="middle">1</text><text x="331" y="675.66">Water Tank</text><text x="429.800" y="675.66">Steel</text><text x="279.100" y="689.54" text-anchor="middle">4</text><text x="312" y="689.54" text-anchor="middle">1</text><text x="331" y="689.54">Bottom Shell</text><text x="279.100" y="703.43" text-anchor="middle">3</text><text x="312" y="703.43" text-anchor="middle">1</text><text x="331" y="703.43">Under Cover</text><text x="429.800" y="703.43">Steel</text><text x="279.100" y="717.31" text-anchor="middle">2</text><text x="312" y="717.31" text-anchor="middle">1</text><text x="331" y="717.31">Top Lid Assembly</text><text x="279.100" y="731.20" text-anchor="middle">1</text><text x="312" y="731.20" text-anchor="middle">1</text><text x="331" y="731.20">Main Shell Component</text><text x="429.800" y="731.20">Steel</text><text x="279.100" y="744.58" text-anchor="middle">Item</text><text x="312" y="744.58" text-anchor="middle">Qty</text><text x="377.500" y="744.58" text-anchor="middle">Part Number</text><text x="459.500" y="744.58" text-anchor="middle">Material</text><text x="377.500" y="756.08" text-anchor="middle">Parts List</text></g></g>
<g id="titleblock"><rect x="641.800" y="679.400" width="473.600" height="80.800" fill="#fff"/><g id="tlogo">
<path d="M656.500 746 L700.500 746 L700.500 753 Q700.500 755.600 698 755.600 L659 755.600 Q656.500 755.600 656.500 753 Z" fill="#a2480c"/>
<path d="M698 709.500 L700.500 712 L700.500 747 L698 747 Z" fill="#c4520b"/>
<path d="M656.500 743.500 L700.500 743.500 L700.500 747.500 L656.500 747.500 Z" fill="#c2500a"/>
<path d="M649.900 713.500 L656.800 707.500 L656.800 744 L653.500 748 L649.900 747.500 Z" fill="#f5a868"/>
<path d="M656.500 707.300 L696 707.300 Q698.200 707.300 698.200 709.500 L698.200 744 L656.500 744 Z" fill="#fb6e05"/>
<path d="M671 716.500 H685.500 V720.700 H676.200 V725.700 H684.500 V729.800 H676.200 V738.200 H671 Z" fill="#1c1c1c"/>
</g><text x="714.600" y="723.600" font-family="Liberation Sans, sans-serif" font-size="22.800" font-weight="700" fill="#0a0a0a" textLength="127.400" lengthAdjust="spacingAndGlyphs">AUTODESK</text><text x="712.600" y="747.300" font-family="Liberation Sans, sans-serif" font-size="22" fill="#0a0a0a" textLength="109.600" lengthAdjust="spacingAndGlyphs">Fusion 360</text><g stroke="#777" stroke-width="1" fill="none"><path d="M641.800 679.400 H1115.400 V760.200 H641.800 Z"/><path d="M641.800 699.700 H1115.400 M848.400 738.500 H1115.400"/><path d="M680.200 679.400 V699.700 M718.400 679.400 V699.700 M848.400 679.400 V760.200 M981.600 679.400 V760.200 M1003.600 738.500 V760.200 M1082.400 738.500 V760.200"/></g><g font-family="Liberation Sans, sans-serif" font-size="5.400" fill="#333" stroke="#333" stroke-width=".2"><text x="643.4" y="686.2">Size</text><text x="682" y="686.2">Scale</text><text x="720.6" y="686.2">Material</text><text x="850.6" y="686.2">Created by</text><text x="984.2" y="686.2">Approved by</text><text x="850.6" y="707.4">Model Name:</text><text x="984.2" y="707.4">Part No.</text><text x="850.6" y="744.6">Mass</text><text x="1005.6" y="744.6">Date of issue</text><text x="1085" y="744.6">Sheet</text></g><g font-family="Liberation Sans, sans-serif" fill="#0a0a0a" stroke="#0a0a0a" stroke-width=".4"><text x="643.200" y="697.200" font-size="10.600" textLength="12.800" lengthAdjust="spacingAndGlyphs">A3</text><text x="681.600" y="697.200" font-size="10.600" textLength="15.200" lengthAdjust="spacingAndGlyphs">1:5</text><text x="720.600" y="696.200" font-size="9" textLength="14" lengthAdjust="spacingAndGlyphs">-----</text><text x="850.600" y="697.200" font-size="10.600" textLength="53" lengthAdjust="spacingAndGlyphs">Clint Brown</text><text x="926.700" y="697.200" font-size="10.600" textLength="52.500" lengthAdjust="spacingAndGlyphs">25/07/2024</text><text x="850.400" y="724.600" font-size="14.400" stroke-width=".35" textLength="127.400" lengthAdjust="spacingAndGlyphs">Espresso Machine v3</text><text x="984" y="724.600" font-size="16" stroke-width=".35" textLength="124.800" lengthAdjust="spacingAndGlyphs">Espresso Machine</text><text x="850.200" y="757.400" font-size="10.600" textLength="35" lengthAdjust="spacingAndGlyphs">16.6 kg</text><text x="1091.200" y="757.400" font-size="10.600" textLength="14.400" lengthAdjust="spacingAndGlyphs">1/2</text></g></g>
<g id="overlays">
<!-- sheets button -->
<rect x="217" y="143" width="50" height="50" rx="5" fill="#2c2c2c" fill-opacity=".96"/>
<path d="M233 155 H242.4 L254 166 V180 Q254 182 252 182 H233 Q231 182 231 180 V157 Q231 155 233 155 Z" fill="#1f6688"/>
<path d="M242.4 155 V163.500 Q242.4 165.8 244.6 165.8 H254 Z" fill="#2a7aa0"/>
<path d="M242.8 155.500 V163.400 Q242.8 165.500 245 165.500 H253.500" fill="none" stroke="#1b3c4c" stroke-width=".9"/>
<!-- hand cursor -->
<g transform="translate(234.2,177.4) scale(1.06,.98)">
 <path d="M1.2 0.6 C2.6 0 3.6 1 4 2.4 L5.4 7 L6 5.8 C7 5.2 8.2 5.6 8.4 6.6 C9.2 6 10.4 6.4 10.6 7.4 C11.4 7 12.4 7.4 12.5 8.6 L12.4 12 C12.3 14.6 11 16.6 8.6 16.6 L6.8 16.6 C5 16.6 3.6 15.6 2.6 13.6 L0.2 9.6 C-0.4 8.4 0.8 7.6 1.8 8.4 L3 9.8 L0.4 2.2 C0 1.4 0.4 0.9 1.2 0.6 Z" fill="#fff" stroke="#111" stroke-width="1"/>
 <path d="M6.2 9.2 V13.4 M8.4 9.2 V13.4 M10.5 9.4 V13.4" stroke="#111" stroke-width=".9"/>
</g>
<!-- tooltip -->
<path d="M266.5 166 L272.5 160.2 V171.8 Z" fill="#2c2c2c"/>
<path d="M272.300 143 H375 Q379 143 379 147 V189 Q379 193 375 193 H272.300 Z" fill="#333" fill-opacity=".96"/>
<text x="292" y="173" font-family="Liberation Sans, sans-serif" font-size="15" fill="#2a93cd" textLength="67" lengthAdjust="spacingAndGlyphs">Sheets (2)</text>
<!-- bottom toolbars -->
<rect x="335.5" y="714" width="155" height="54" rx="8" fill="#000" fill-opacity=".07"/><rect x="336.8" y="715.300" width="152.4" height="51.400" rx="7" fill="#000" fill-opacity=".1"/><rect x="495.5" y="714" width="155" height="54" rx="8" fill="#000" fill-opacity=".07"/><rect x="496.8" y="715.300" width="152.4" height="51.400" rx="7" fill="#000" fill-opacity=".1"/><rect x="655.5" y="714" width="105" height="54" rx="8" fill="#000" fill-opacity=".07"/><rect x="656.8" y="715.300" width="102.4" height="51.400" rx="7" fill="#000" fill-opacity=".1"/><rect x="765.5" y="714" width="255" height="54" rx="8" fill="#000" fill-opacity=".07"/><rect x="766.8" y="715.300" width="252.4" height="51.400" rx="7" fill="#000" fill-opacity=".1"/>
<g fill="#2a2a2a" fill-opacity=".91">
 <rect x="338" y="716.5" width="150" height="49" rx="6"/>
 <rect x="498" y="716.5" width="150" height="49" rx="6"/>
 <rect x="658" y="716.5" width="100" height="49" rx="6"/>
 <rect x="768" y="716.5" width="250" height="49" rx="6"/>
</g>
<g id="tb1">
<path d="M343.5 752 V727 Q343.5 721.8 348.500 721.8 H377.500 Q382.500 721.8 382.500 727 V752" fill="none" stroke="url(#actg)" stroke-width="1.8"/>
<path d="M358.6 731.2 C359.8 731.2 360.3 732 360.3 733 L360.4 739.6 L361 739.6 L361.2 731.6 C361.2 730.4 363.6 730.4 363.7 731.6 L364 739.6 L364.600 739.6 L365.3 732.6 C365.5 731.5 367.7 731.7 367.7 732.9 L367.500 740.4 L368.100 740.5 L369.500 735.6 C369.900 734.5 371.800 735 371.600 736.2 L370.300 744.400 C369.800 748 368.900 750.2 367.300 751.8 C365.900 753.1 361.800 753.4 359.700 752 C357.500 750.4 354.200 744.800 352.400 741.700 C351.800 740.500 353.100 739.500 354.300 740.300 L356.900 743.200 L356.800 733 C356.800 732 357.400 731.200 358.600 731.200 Z" fill="#1fa8ea"/>
<path d="M413.1 731.6 L418 736.8 L416.900 737.900 L414 734.9 V747.200 L419 742.200 L420.800 744 L413.100 751.700 L405.400 744 L407.200 742.200 L412.200 747.200 V734.900 L409.300 737.900 L408.200 736.800 Z" fill="#fff"/>
<path d="M452.2 736.2 H464.800 Q466.300 736.200 466.300 737.700 V747.600 Q466.300 749.100 464.800 749.100 H452.200 Q450.700 749.100 450.700 747.600 V737.700 Q450.700 736.200 452.200 736.200 Z M467.600 741.200 L472.400 737 Q473.100 736.500 473.100 737.400 V748 Q473.100 748.800 472.400 748.300 L467.600 744.200 Z" fill="#fff"/>
<rect x="453" y="738.400" width="4" height="3" fill="#2b2b2b"/>
<path d="M477.400 725.300 L481.300 732.600 H473.600 Z" fill="#fff"/>
</g>
<g id="tb2">
<g transform="translate(523,742) rotate(45)" fill="#dcdcdc">
 <rect x="-2.700" y="-11.600" width="5.400" height="2.600" rx=".8"/>
 <rect x="-2.700" y="-8.200" width="5.400" height="9.800"/>
 <path d="M-2.700 2.400 H2.700 L0 7 Z"/>
</g>
<path d="M517.200 749.400 Q518.800 747 520.300 749.400 Q521.800 751.800 523.400 749.400 Q524.900 747.200 526.600 749.600" fill="none" stroke="#dcdcdc" stroke-width="1"/>
<path d="M565.200 736.100 H580.700 Q581.900 736.100 581.900 737.300 V751.200 L578.400 748.300 H565.200 Q564 748.300 564 747.100 V737.300 Q564 736.100 565.200 736.100 Z" fill="#e2e2e2"/>
<path d="M566.800 739.400 H579 M566.800 742 H579 M566.800 744.600 H575.500" stroke="#6a6a6a" stroke-width="1.100" fill="none"/>
<path d="M587.500 724.700 L591.600 732.600 H583.400 Z" fill="#fff"/>
<path d="M611.700 743.100 C616 736.600 630.300 736.600 634.600 743.100 C630.300 749.600 616 749.600 611.700 743.100 Z" fill="#e2e2e2"/>
<circle cx="623.150" cy="743.100" r="3.700" fill="none" stroke="#2b2b2b" stroke-width="1.500"/>
<path d="M614.400 751.300 L631.400 735.200" stroke="#2b2b2b" stroke-width="2.600"/>
<path d="M614.100 751.400 L631.100 735.100" stroke="#e2e2e2" stroke-width="1.100"/>
</g>
<g id="tb3">
<g transform="translate(684.3,739.4) rotate(-36)">
 <rect x="-13.800" y="-3.300" width="27.600" height="6.800" fill="#fff"/>
 <g stroke="#2b2b2b" stroke-width=".9"><path d="M-10.0 -3 V-1.2" /><path d="M-7.5 -3 V-0.2" /><path d="M-5.0 -3 V-1.2" /><path d="M-2.5 -3 V-0.2" /><path d="M0.0 -3 V-1.2" /><path d="M2.5 -3 V-0.2" /><path d="M5.0 -3 V-1.2" /><path d="M7.5 -3 V-0.2" /><path d="M10.0 -3 V-1.2" /></g>
</g>
<path d="M722.900 734.300 Q722.900 732.700 724.500 732.700 H730.800 L732.600 734.700 H742.500 Q744.100 734.700 744.100 736.300 V747.900 Q744.100 749.500 742.500 749.500 H724.500 Q722.900 749.500 722.900 747.900 Z" fill="#f2f2f2"/>
<path d="M723.400 735.200 H731.800" stroke="#2b2b2b" stroke-width=".7"/>
<path d="M682 768 L688.800 760.600 L695.600 768" fill="none" stroke="#777" stroke-width="1"/>
</g>
<g id="tb4">
<path d="M791.5 732.2 L793.7 732.2 L794.1 735.5 L795.2 735.8 L797.5 733.4 L799.3 734.7 L797.7 737.6 L798.3 738.5 L801.6 737.9 L802.3 740.0 L799.3 741.4 L799.3 742.6 L802.3 744.0 L801.6 746.1 L798.3 745.5 L797.7 746.4 L799.3 749.3 L797.5 750.6 L795.2 748.2 L794.1 748.5 L793.7 751.8 L791.5 751.8 L791.1 748.5 L790.0 748.2 L787.7 750.6 L785.9 749.3 L787.5 746.4 L786.9 745.5 L783.6 746.1 L782.9 744.0 L785.9 742.6 L785.9 741.4 L782.9 740.0 L783.6 737.9 L786.9 738.5 L787.5 737.6 L785.9 734.7 L787.7 733.4 L790.0 735.8 L791.1 735.5 Z" fill="#fff"/>
<circle cx="792.6" cy="742.0" r="4.300" fill="#2d2d2d"/>
<rect x="834.9" y="730.800" width="16.300" height="22.200" fill="#fff"/>
<rect x="836.300" y="732.100" width="13.500" height="9.700" fill="#2b2b2b"/>
<circle cx="843" cy="736.900" r="3.100" fill="#fff"/>
<path d="M837 745.600 H849 M837 749.200 H849" stroke="#2b2b2b" stroke-width="1"/>
<rect x="840" y="744.300" width="2" height="2.600" fill="#2b2b2b"/><rect x="844.600" y="747.900" width="2" height="2.600" fill="#2b2b2b"/>
<g fill="#fff">
<path d="M889.500 733 H903 L896.500 738.400 H883 Z"/>
<path d="M897.900 738.800 L903 738.400 L896.500 743.800 H883 L886.500 740.800 H897.500 Z"/>
<path d="M897.900 744.200 L903 743.800 L896.500 751.300 H883 L886.500 746.400 H897.500 Z"/>
</g>
<g fill="#f4f4f4">
<rect x="936.300" y="729.300" width="13.600" height="6.300" rx="1.800"/>
<path d="M933.600 736.600 H952.800 Q954.700 736.600 954.700 738.500 V746.400 Q954.700 748.300 952.800 748.300 H950.800 V744.200 Q950.800 742.400 949 742.400 H937.400 Q935.600 742.400 935.600 744.200 V748.300 H933.600 Q931.700 748.300 931.700 746.400 V738.500 Q931.700 736.600 933.600 736.600 Z"/>
<rect x="936.800" y="743.800" width="12.800" height="9.900" rx="1.800"/>
</g>
<rect x="948" y="738.600" width="3" height="2.200" fill="#2b2b2b"/>
<rect x="984" y="733" width="18.300" height="18" fill="#f4f4f4"/>
<rect x="985.200" y="742.200" width="8.600" height="7.600" fill="#2b2b2b"/>
<path d="M992.800 743 L999.300 736.200" stroke="#2b2b2b" stroke-width="2"/>
<path d="M994.600 735 H1000.500 V740.900 Z" fill="#2b2b2b"/>
</g>
</g>
</svg>
</div>
</body>
</html>
